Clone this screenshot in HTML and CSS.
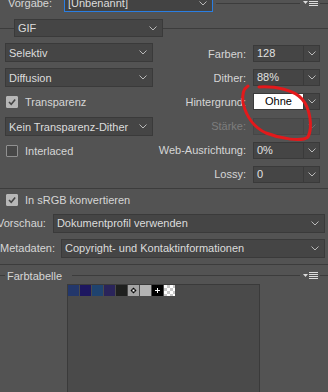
FILE: index.html
```html
<!DOCTYPE html>
<html>
<head>
    <meta charset="UTF-8">
    <meta name="viewport" content="width=device-width, initial-scale=1.0">
    <title>Für Web speichern</title>
    <link rel="stylesheet" href="styles.css">
</head>
<body>
    <div class="preset-row">
        <span class="preset-label">Vorgabe:</span>
        <div class="select preset">
            <span>[Unbenannt]</span>
            <svg class="chev" width="8" height="5" viewBox="0 0 8 5"><polyline points="0.5,0.5 4,4 7.5,0.5"/></svg>
        </div>
        <div class="rule"></div>
        <svg class="menu-icon" width="15" height="7" viewBox="0 0 15 7"><polygon points="0,2 5,2 2.5,5"/><rect x="6" y="0" width="9" height="1"/><rect x="6" y="2" width="9" height="1"/><rect x="6" y="4" width="9" height="1"/><rect x="6" y="6" width="9" height="1"/></svg>
        <div class="rule tail"></div>
    </div>

    <div class="format-row">
        <div class="rule lead"></div>
        <div class="select format">
            <span>GIF</span>
            <svg class="chev" width="8" height="5" viewBox="0 0 8 5"><polyline points="0.5,0.5 4,4 7.5,0.5"/></svg>
        </div>
        <div class="rule"></div>
    </div>

    <div class="settings">
        <div class="left-col">
            <div class="select">
                <span>Selektiv</span>
                <svg class="chev" width="8" height="5" viewBox="0 0 8 5"><polyline points="0.5,0.5 4,4 7.5,0.5"/></svg>
            </div>
            <div class="select">
                <span>Diffusion</span>
                <svg class="chev" width="8" height="5" viewBox="0 0 8 5"><polyline points="0.5,0.5 4,4 7.5,0.5"/></svg>
            </div>
            <label class="check-row">
                <span class="box checked"><svg width="10" height="10" viewBox="0 0 10 10"><polyline points="2,5 4.2,7.3 8.2,2.6"/></svg></span>
                Transparenz
            </label>
            <div class="select">
                <span>Kein Transparenz-Dither</span>
                <svg class="chev" width="8" height="5" viewBox="0 0 8 5"><polyline points="0.5,0.5 4,4 7.5,0.5"/></svg>
            </div>
            <label class="check-row">
                <span class="box"></span>
                Interlaced
            </label>
        </div>

        <div class="right-col">
            <span class="lbl">Farben:</span>
            <div class="field"><span class="val">128</span><span class="arrow"><svg class="chev" width="8" height="5" viewBox="0 0 8 5"><polyline points="0.5,0.5 4,4 7.5,0.5"/></svg></span></div>

            <span class="lbl">Dither:</span>
            <div class="field"><span class="val">88%</span><span class="arrow"><svg class="chev" width="8" height="5" viewBox="0 0 8 5"><polyline points="0.5,0.5 4,4 7.5,0.5"/></svg></span></div>

            <span class="lbl">Hintergrund:</span>
            <div class="field"><span class="val white">Ohne</span><span class="arrow"><svg class="chev" width="8" height="5" viewBox="0 0 8 5"><polyline points="0.5,0.5 4,4 7.5,0.5"/></svg></span></div>

            <span class="lbl disabled">Stärke:</span>
            <div class="field disabled"><span class="val"></span><span class="arrow"><svg class="chev" width="8" height="5" viewBox="0 0 8 5"><polyline points="0.5,0.5 4,4 7.5,0.5"/></svg></span></div>

            <span class="lbl">Web-Ausrichtung:</span>
            <div class="field"><span class="val">0%</span><span class="arrow"><svg class="chev" width="8" height="5" viewBox="0 0 8 5"><polyline points="0.5,0.5 4,4 7.5,0.5"/></svg></span></div>

            <span class="lbl">Lossy:</span>
            <div class="field"><span class="val">0</span><span class="arrow"><svg class="chev" width="8" height="5" viewBox="0 0 8 5"><polyline points="0.5,0.5 4,4 7.5,0.5"/></svg></span></div>
        </div>
    </div>

    <div class="sep"></div>

    <label class="check-row srgb">
        <span class="box checked"><svg width="10" height="10" viewBox="0 0 10 10"><polyline points="2,5 4.2,7.3 8.2,2.6"/></svg></span>
        In sRGB konvertieren
    </label>

    <div class="line-row preview">
        <span>Vorschau:</span>
        <div class="select">
            <span>Dokumentprofil verwenden</span>
            <svg class="chev" width="8" height="5" viewBox="0 0 8 5"><polyline points="0.5,0.5 4,4 7.5,0.5"/></svg>
        </div>
    </div>
    <div class="line-row meta">
        <span>Metadaten:</span>
        <div class="select">
            <span>Copyright- und Kontaktinformationen</span>
            <svg class="chev" width="8" height="5" viewBox="0 0 8 5"><polyline points="0.5,0.5 4,4 7.5,0.5"/></svg>
        </div>
    </div>

    <div class="sep low"></div>

    <div class="table-head">
        <div class="rule lead"></div>
        <span class="table-title">Farbtabelle</span>
        <div class="rule"></div>
        <svg class="menu-icon" width="15" height="7" viewBox="0 0 15 7"><polygon points="0,2 5,2 2.5,5"/><rect x="6" y="0" width="9" height="1"/><rect x="6" y="2" width="9" height="1"/><rect x="6" y="4" width="9" height="1"/><rect x="6" y="6" width="9" height="1"/></svg>
        <div class="rule tail"></div>
    </div>

    <div class="color-table">
        <div class="swatches">
            <span class="swatch" style="background:#23376b"></span>
            <span class="swatch" style="background:#1d1760"></span>
            <span class="swatch" style="background:#1f436f"></span>
            <span class="swatch" style="background:#2a245a"></span>
            <span class="swatch" style="background:#1f201f"></span>
            <span class="swatch" style="background:#a3a3a3"><svg width="11" height="11" viewBox="0 0 11 11"><polygon points="5.5,2.5 8.5,5.5 5.5,8.5 2.5,5.5" fill="#000"/><rect x="4.5" y="4.5" width="2" height="2" fill="#fff"/></svg></span>
            <span class="swatch" style="background:#b4b4b4"></span>
            <span class="swatch" style="background:#000"><svg width="11" height="11" viewBox="0 0 11 11"><rect x="5" y="3" width="1" height="5" fill="#fff"/><rect x="3" y="5" width="5" height="1" fill="#fff"/></svg></span>
            <span class="swatch checker"></span>
        </div>
    </div>

    <svg class="markup" width="328" height="392" viewBox="0 0 328 392">
        <path d="M259 87 C276 86 294 90 302 99 C310 108 313 127 308 137 C302 142 281 139 266 133 C253 127 246 115 243 103 C242 95 243 89 248 86"/>
    </svg>
</body>
</html>
```

FILE: styles.css
```css
body {
    margin: 0;
    width: 328px;
    height: 392px;
    overflow: hidden;
    position: relative;
    background-color: #535353;
    font-family: "Liberation Sans", Arial, sans-serif;
    font-size: 11px;
    color: #d6d6d6;
}

.chev polyline {
    fill: none;
    stroke: #b9b9b9;
    stroke-width: 1;
}

.rule {
    flex: 1;
    height: 1px;
    background-color: #3c3c3c;
}
.rule.lead {
    flex: none;
    width: 5px;
}
.rule.tail {
    flex: none;
    width: 8px;
    margin-left: 2px;
}

.menu-icon {
    fill: #dcdcdc;
    margin-left: 3px;
}

.select {
    display: flex;
    align-items: center;
    justify-content: space-between;
    box-sizing: border-box;
    height: 19px;
    padding: 0 5px 0 3px;
    background-color: #454545;
    border: 1px solid #3a3a3a;
    color: #dcdcdc;
    white-space: nowrap;
}

/* top preset row */
.preset-row {
    display: flex;
    align-items: flex-start;
    height: 18px;
    margin-top: -6px;
}
.preset-label {
    width: 56px;
    margin: 3px 0 0 8px;
}
.preset {
    width: 149px;
    height: 18px;
    border-color: #2a7ee2;
    background-color: #434343;
}
.preset-row .rule {
    margin: 9px 0 0 3px;
}
.preset-row .rule.tail {
    margin: 9px 0 0 2px;
}
.preset-row .menu-icon {
    margin-top: 5px;
}

.format-row {
    display: flex;
    align-items: center;
    margin-top: 7px;
}
.format-row .rule.lead {
    width: 14px;
}
.format {
    width: 149px;
    height: 18px;
}

/* settings block */
.settings {
    display: flex;
    margin-top: 6px;
}
.left-col {
    flex: none;
    display: flex;
    flex-direction: column;
    gap: 6px;
    width: 148px;
    margin-left: 5px;
}
.check-row {
    display: flex;
    align-items: center;
    gap: 7px;
    height: 18px;
    margin-left: 1px;
}
.box {
    display: flex;
    align-items: center;
    justify-content: center;
    box-sizing: border-box;
    width: 12px;
    height: 12px;
    border: 1px solid #909090;
    border-radius: 1px;
    background-color: #474747;
}
.box.checked {
    border-color: #b7b7b7;
    background-color: #b7b7b7;
}
.box polyline {
    fill: none;
    stroke: #454545;
    stroke-width: 1.6;
}

.right-col {
    flex: none;
    display: grid;
    grid-template-columns: auto 67px;
    grid-auto-rows: 17px;
    column-gap: 7px;
    row-gap: 7.2px;
    align-items: center;
    margin: 2px 8px 0 auto;
}
.lbl {
    justify-self: end;
    white-space: nowrap;
}
.lbl.disabled {
    color: #7e7e7e;
}
.field {
    display: flex;
    box-sizing: border-box;
    height: 17px;
    border: 1px solid #3a3a3a;
    background-color: #454545;
    color: #e2e2e2;
}
.field .val {
    width: 46px;
    padding-left: 3px;
    border-right: 1px solid #3a3a3a;
    line-height: 15px;
}
.field .val.white {
    padding-left: 0;
    width: 49px;
    background-color: #fff;
    color: #000;
    text-align: center;
}
.field .arrow {
    flex: 1;
    display: flex;
    align-items: center;
    justify-content: center;
}
.field.disabled {
    background-color: #4d4d4d;
    border-color: #464646;
}
.field.disabled .val {
    border-right-color: #464646;
}
.field.disabled .chev polyline {
    stroke: #6c6c6c;
}

.sep {
    height: 1px;
    margin-top: 5px;
    background-color: #3c3c3c;
}

.srgb {
    margin: 2px 0 0 6px;
}

.line-row {
    display: flex;
    align-items: center;
    gap: 7px;
    margin: 5px 3px 0 -3px;
    white-space: nowrap;
}
.line-row .select {
    flex: 1;
}
.line-row.meta {
    gap: 6px;
    margin-top: 6px;
    margin-left: 0;
}

.sep.low {
    margin-top: 6px;
}

.table-head {
    display: flex;
    align-items: center;
    height: 16px;
    margin-top: 3px;
}
.table-title {
    margin: 0 10px 0 2px;
}

.color-table {
    box-sizing: border-box;
    width: 193px;
    height: 120px;
    margin-left: 67px;
    background-color: #4a4a4a;
    border: 1px solid #3a3a3a;
    border-bottom: none;
}
.swatches {
    display: flex;
    gap: 1px;
}
.swatch {
    width: 11px;
    height: 11px;
}
.checker {
    background-image: conic-gradient(#c8c8c8 25%, #fff 0 50%, #c8c8c8 0 75%, #fff 0);
    background-size: 6px 6px;
}

.markup {
    position: absolute;
    top: 0;
    left: 0;
    pointer-events: none;
}
.markup path {
    fill: none;
    stroke: #e3191b;
    stroke-width: 3;
    stroke-linecap: round;
}
```
